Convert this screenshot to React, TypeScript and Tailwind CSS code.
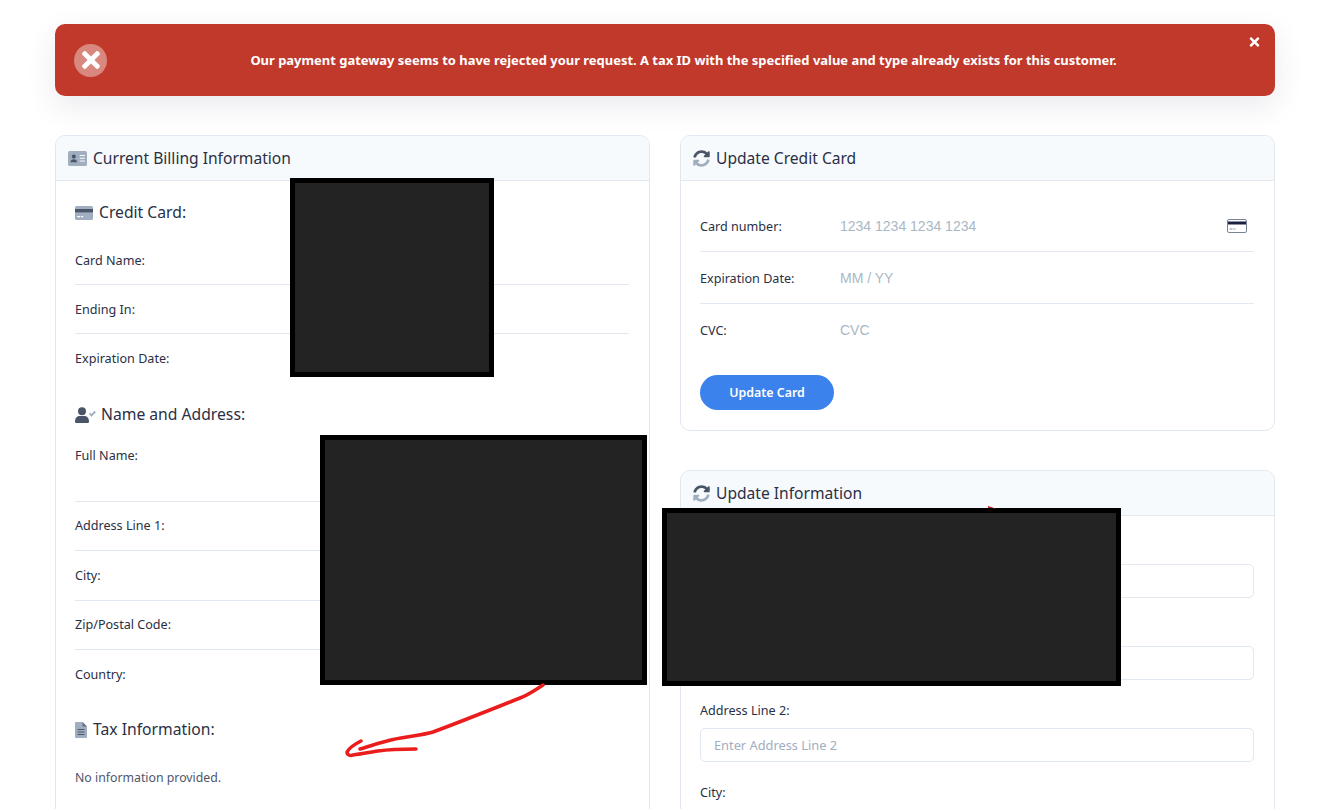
import React from "react";
import { FaTimes } from "react-icons/fa";

const DARK = "#4a5568";
const LIGHT = "#a0aec0";

function IdCard() {
  return (
    <svg viewBox="0 0 18 14" className="w-[19px] h-[15px] shrink-0">
      <rect x="0" y="0" width="18" height="14" rx="1.5" fill={LIGHT} />
      <circle cx="5.5" cy="5" r="1.9" fill={DARK} />
      <path d="M2.4 10.6c0-1.8 1.4-2.8 3.1-2.8s3.1 1 3.1 2.8z" fill={DARK} />
      <path d="M11 4.2h5M11 6.8h5M11 9.4h5" stroke="#fff" strokeWidth="0.9" />
    </svg>
  );
}

function CardIcon() {
  return (
    <svg viewBox="0 0 18 14" className="w-[18px] h-[14px] shrink-0">
      <rect x="0" y="0" width="18" height="14" rx="1.5" fill={LIGHT} />
      <rect x="0" y="3" width="18" height="3.4" fill={DARK} />
      <path d="M2.2 10.6h3M6.2 10.6h2" stroke="#fff" strokeWidth="1.1" />
    </svg>
  );
}

function UserCheck() {
  return (
    <svg viewBox="0 0 21 16" className="w-[21px] h-[16px] shrink-0">
      <circle cx="7" cy="4.2" r="4" fill={DARK} />
      <path d="M0 14.4c0-3.6 2.4-5.4 4.6-5.4h4.8c2.2 0 4.6 1.8 4.6 5.4 0 .9-.7 1.6-1.6 1.6H1.6C.7 16 0 15.300 0 14.400z" fill={DARK} />
      <path d="M14.600 6.400l1.900 1.900 3.700-3.800" stroke={LIGHT} strokeWidth="1.900" fill="none" />
    </svg>
  );
}

function FileIcon() {
  return (
    <svg viewBox="0 0 12 16" className="w-[12px] h-[16px] shrink-0">
      <path d="M0 1a1 1 0 0 1 1-1h6.500L12 4.500V15a1 1 0 0 1-1 1H1a1 1 0 0 1-1-1z" fill={LIGHT} />
      <path d="M2.500 7.500h7M2.500 10h7M2.500 12.500h7" stroke={DARK} strokeWidth="1" />
      <path d="M7.500 0L12 4.500H7.500z" fill={DARK} opacity="0.7" />
    </svg>
  );
}

function SyncIcon() {
  return (
    <svg viewBox="0 0 512 512" className="w-[17px] h-[17px] shrink-0">
      <path
        fill={DARK}
        d="M370.72 133.28C339.458 104.008 298.888 87.962 255.848 88c-77.458.068-144.328 53.178-162.791 126.85-1.344 5.363-6.122 9.15-11.651 9.15H24.103c-7.498 0-13.194-6.807-11.807-14.176C33.933 94.924 134.813 8 256 8c66.448 0 126.791 26.136 171.315 68.685L463.03 40.97C478.149 25.851 504 36.559 504 57.941V192c0 13.255-10.745 24-24 24H345.941c-21.382 0-32.09-25.851-16.971-40.971l41.75-41.749z"
      />
      <path
        fill={LIGHT}
        d="M32 296h134.059c21.382 0 32.09 25.851 16.971 40.971l-41.75 41.75c31.262 29.273 71.835 45.319 114.876 45.28 77.418-.07 144.315-53.144 162.787-126.849 1.344-5.363 6.122-9.15 11.651-9.15h57.304c7.498 0 13.194 6.807 11.807 14.176C478.067 417.076 377.187 504 256 504c-66.448 0-126.791-26.136-171.315-68.685L48.97 471.03C33.851 486.149 8 475.441 8 454.059V320c0-13.255 10.745-24 24-24z"
      />
    </svg>
  );
}

function StripeCard() {
  return (
    <svg viewBox="0 0 20 14" className="w-[20px] h-[14px]">
      <rect x="0.500" y="0.500" width="19" height="13" rx="1.500" fill="#fff" stroke="#7a8296" />
      <rect x="1" y="2.500" width="18" height="3" fill="#1a2040" />
      <path d="M2.500 10h3M6.500 10h2" stroke="#7a8296" strokeWidth="0.900" />
    </svg>
  );
}

function CardHeader({ icon, title }: { icon: React.ReactNode; title: string }) {
  return (
    <div className="h-[45px] flex items-center gap-[6px] px-[12px] bg-[#f7fafc] border-b border-[#e2e8f0] rounded-t-[10px]">
      {icon}
      <span className="pt-[2px] text-[15.600px] text-[#2a2f45]">{title}</span>
    </div>
  );
}

function SectionTitle({ icon, title, className }: { icon: React.ReactNode; title: string; className: string }) {
  return (
    <div className={`h-8 flex items-center text-[15.700px] text-[#2a2f45] ${className}`}>
      {icon}
      <span>{title}</span>
    </div>
  );
}

function InfoRow({ label, last, tall, short }: { label: string; last?: boolean; tall?: boolean; short?: boolean }) {
  const size = tall
    ? "h-[70.500px] items-start pt-[16px]"
    : short
      ? last
        ? "h-[49px] items-center pt-[1px]"
        : "h-[49px] items-center pt-[2px]"
      : "h-[49.500px] items-center pt-[2px]";
  return (
    <div className={`flex text-[12.600px] text-[#2a2f45] ${last ? "" : "border-b border-[#e2e8f0]"} ${size}`}>
      {label}
    </div>
  );
}

function StripeRow({ label, placeholder, last, icon }: { label: string; placeholder: string; last?: boolean; icon?: React.ReactNode }) {
  return (
    <div className={`h-[52px] flex items-center pt-[1px] ${last ? "" : "border-b border-[#e2e8f0]"}`}>
      <span className="w-[140px] pt-[2px] text-[12.600px] text-[#2a2f45]">{label}</span>
      <span className="flex-1 text-[14px] text-[#aab7c4] font-['Liberation_Sans',sans-serif]">{placeholder}</span>
      {icon && <span className="flex mr-[7px]">{icon}</span>}
    </div>
  );
}

function Field({ label, placeholder }: { label: string; placeholder: string }) {
  return (
    <div className="mb-[21px]">
      <label className="block h-[18px] pt-[1px] leading-[18px] mb-[9px] text-[12.600px] text-[#2a2f45]">{label}</label>
      <input
        readOnly
        placeholder={placeholder}
        className="block w-full h-[34px] px-[13px] border border-[#e2e8f0] rounded-[5px] bg-white text-[12.800px] outline-none placeholder:text-[#a0aec0]"
      />
    </div>
  );
}

export default function App() {
  return (
    <div className="relative h-[809px] overflow-hidden bg-white pl-[55px] pr-[56px] pt-6 font-['Noto_Sans',sans-serif]">
      <div className="relative h-[72px] flex items-center pl-[19px] pr-[15px] rounded-[10px] bg-[#c0392b] shadow-[0_10px_30px_rgba(50,50,93,0.1)]">
        <div className="w-[33px] h-[33px] shrink-0 rounded-full bg-white/40 flex items-center justify-center text-white">
          <FaTimes className="w-[20px] h-[26px]" />
        </div>
        <p className="flex-1 pt-[1px] text-center text-[12.950px] font-bold text-white">
          Our payment gateway seems to have rejected your request. A tax ID with the specified value and type already exists for this customer.
        </p>
        <FaTimes className="absolute top-[11px] right-[15px] w-[11px] h-[14px] text-white" />
      </div>

      <div className="mt-[39px] flex gap-[30px] items-start">
        <section className="w-[595px] shrink-0 border border-[#e2e8f0] rounded-[10px] bg-white">
          <CardHeader icon={<IdCard />} title="Current Billing Information" />
          <div className="pl-[19px] pr-5 pb-5">
            <SectionTitle className="mt-[16px] mb-[7px] gap-[6px]" icon={<CardIcon />} title="Credit Card:" />
            <InfoRow label="Card Name:" short />
            <InfoRow label="Ending In:" short />
            <InfoRow label="Expiration Date:" last short />
            <SectionTitle className="mt-[16px] gap-[5px]" icon={<UserCheck />} title="Name and Address:" />
            <InfoRow label="Full Name:" tall />
            <InfoRow label="Address Line 1:" />
            <InfoRow label="City:" />
            <InfoRow label="Zip/Postal Code:" />
            <InfoRow label="Country:" last />
            <SectionTitle className="mt-[14.500px] mb-2 gap-[6px]" icon={<FileIcon />} title="Tax Information:" />
            <div className="h-[49px] flex items-center text-[12.300px] text-[#4f566b]">No information provided.</div>
          </div>
        </section>

        <div className="w-[595px] shrink-0 flex flex-col gap-[39px]">
          <section className="border border-[#e2e8f0] rounded-[10px] bg-white">
            <CardHeader icon={<SyncIcon />} title="Update Credit Card" />
            <div className="pl-[19px] pr-5 pt-[19px] pb-5">
              <StripeRow label="Card number:" placeholder="1234 1234 1234 1234" icon={<StripeCard />} />
              <StripeRow label="Expiration Date:" placeholder="MM / YY" />
              <StripeRow label="CVC:" placeholder="CVC" last />
              <button className="mt-[19px] block w-[134px] h-[35px] pt-[1px] rounded-full bg-[#3b82ec] text-white text-[12.400px] font-semibold">
                Update Card
              </button>
            </div>
          </section>

          <section className="border border-[#e2e8f0] rounded-[10px] bg-white">
            <CardHeader icon={<SyncIcon />} title="Update Information" />
            <div className="pl-[19px] pr-5 pt-[21px]">
              <Field label="Full Name:" placeholder="Enter Full Name" />
              <Field label="Address Line 1:" placeholder="Enter Address Line 1" />
              <Field label="Address Line 2:" placeholder="Enter Address Line 2" />
              <Field label="City:" placeholder="Enter City" />
            </div>
          </section>
        </div>
      </div>

      <div className="absolute left-[290px] top-[178px] w-[204px] h-[199px] bg-[#232323] border-[5px] border-black" />
      <div className="absolute left-[320px] top-[435px] w-[327px] h-[250px] bg-[#232323] border-[5px] border-black" />
      <div className="absolute left-[662px] top-[508px] w-[459px] h-[178px] bg-[#232323] border-[5px] border-black" />

      <svg viewBox="0 0 1331 809" className="absolute inset-0 w-[1331px] h-[809px] pointer-events-none" fill="none">
        <path
          d="M543 685 C535 690 528 695 520 698 C490 710 460 722 433 732 C420 736 400 737 387 741 C375 744 368 747 360 749 M361 741 C355 744 349 748 347 752 C347 755 350 756 353 755 C362 754 370 752 378 751 C392 749 404 749 416 749"
          stroke="#ea1c1c"
          strokeWidth="3.500"
          strokeLinecap="round"
          strokeLinejoin="round"
        />
        <path d="M988 508 L988 506 L997 509 L992 508 Z" fill="#c81e1e" />
      </svg>
    </div>
  );
}
